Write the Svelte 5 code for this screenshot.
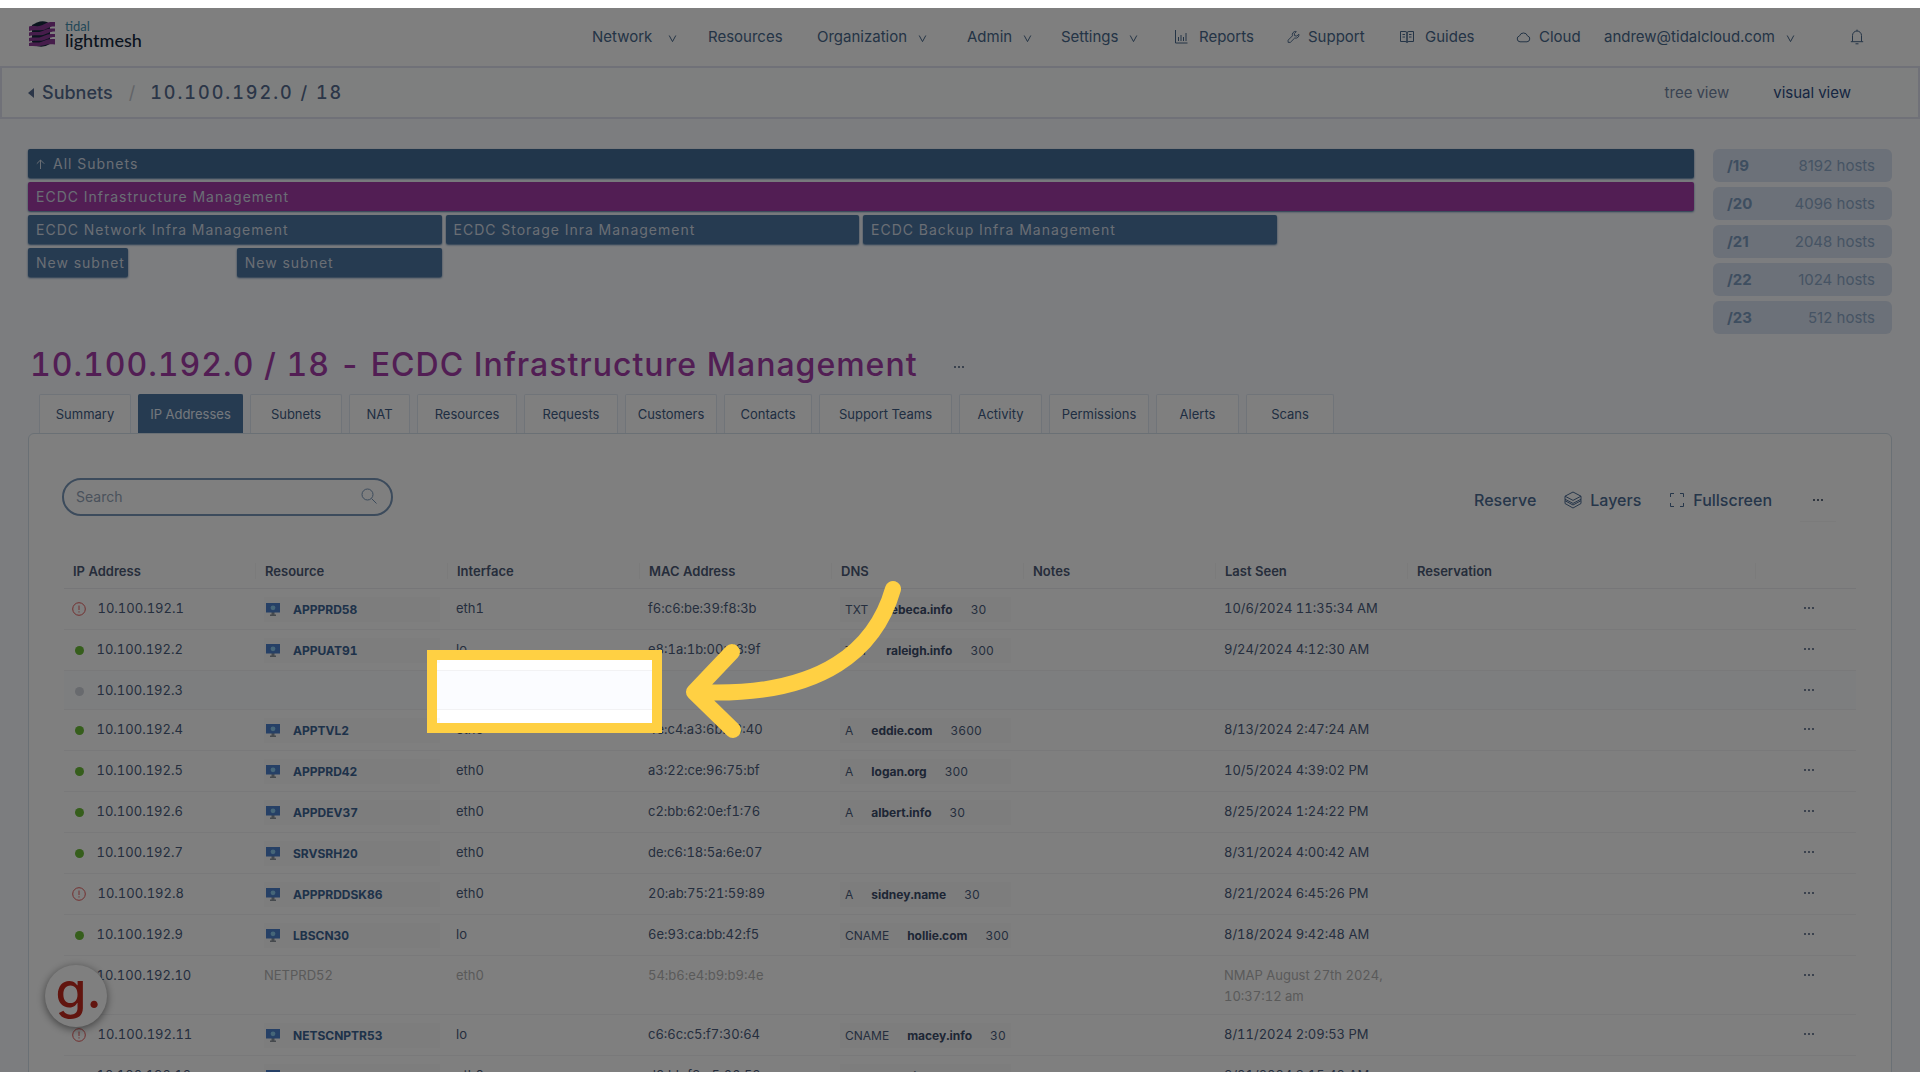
<script lang="ts">
  type Dns = { type: string; name: string; ttl: number };
  type Row = {
    ip: string;
    status: 'up' | 'warn' | 'free';
    resource?: string;
    iface?: string;
    mac?: string;
    dns?: Dns;
    seen?: string;
    discovered?: boolean;
  };

  const hosts = [
    { mask: '/19', count: 8192 },
    { mask: '/20', count: 4096 },
    { mask: '/21', count: 2048 },
    { mask: '/22', count: 1024 },
    { mask: '/23', count: 512 },
  ];

  const tabs = [
    'Summary',
    'IP Addresses',
    'Subnets',
    'NAT',
    'Resources',
    'Requests',
    'Customers',
    'Contacts',
    'Support Teams',
    'Activity',
    'Permissions',
    'Alerts',
    'Scans',
  ];

  const columns = [
    'IP Address',
    'Resource',
    'Interface',
    'MAC Address',
    'DNS',
    'Notes',
    'Last Seen',
    'Reservation',
  ];

  const rows: Row[] = [
    { ip: '10.100.192.1', status: 'warn', resource: 'APPPRD58', iface: 'eth1', mac: 'f6:c6:be:39:f8:3b', dns: { type: 'TXT', name: 'rebeca.info', ttl: 30 }, seen: '10/6/2024 11:35:34 AM' },
    { ip: '10.100.192.2', status: 'up', resource: 'APPUAT91', iface: 'lo', mac: 'e8:1a:1b:00:48:9f', dns: { type: 'TXT', name: 'raleigh.info', ttl: 300 }, seen: '9/24/2024 4:12:30 AM' },
    { ip: '10.100.192.3', status: 'free' },
    { ip: '10.100.192.4', status: 'up', resource: 'APPTVL2', iface: 'eth0', mac: '4e:c4:a3:6b:d3:40', dns: { type: 'A', name: 'eddie.com', ttl: 3600 }, seen: '8/13/2024 2:47:24 AM' },
    { ip: '10.100.192.5', status: 'up', resource: 'APPPRD42', iface: 'eth0', mac: 'a3:22:ce:96:75:bf', dns: { type: 'A', name: 'logan.org', ttl: 300 }, seen: '10/5/2024 4:39:02 PM' },
    { ip: '10.100.192.6', status: 'up', resource: 'APPDEV37', iface: 'eth0', mac: 'c2:bb:62:0e:f1:76', dns: { type: 'A', name: 'albert.info', ttl: 30 }, seen: '8/25/2024 1:24:22 PM' },
    { ip: '10.100.192.7', status: 'up', resource: 'SRVSRH20', iface: 'eth0', mac: 'de:c6:18:5a:6e:07', seen: '8/31/2024 4:00:42 AM' },
    { ip: '10.100.192.8', status: 'warn', resource: 'APPPRDDSK86', iface: 'eth0', mac: '20:ab:75:21:59:89', dns: { type: 'A', name: 'sidney.name', ttl: 30 }, seen: '8/21/2024 6:45:26 PM' },
    { ip: '10.100.192.9', status: 'up', resource: 'LBSCN30', iface: 'lo', mac: '6e:93:ca:bb:42:f5', dns: { type: 'CNAME', name: 'hollie.com', ttl: 300 }, seen: '8/18/2024 9:42:48 AM' },
    { ip: '10.100.192.10', status: 'up', resource: 'NETPRD52', iface: 'eth0', mac: '54:b6:e4:b9:b9:4e', seen: 'NMAP August 27th 2024, 10:37:12 am', discovered: true },
    { ip: '10.100.192.11', status: 'warn', resource: 'NETSCNPTR53', iface: 'lo', mac: 'c6:6c:c5:f7:30:64', dns: { type: 'CNAME', name: 'macey.info', ttl: 30 }, seen: '8/11/2024 2:09:53 PM' },
    { ip: '10.100.192.12', status: 'up', resource: 'APPDEV12', iface: 'eth0', mac: 'd2:bb:f8:e5:66:52', dns: { type: 'A', name: 'brant.biz', ttl: 30 }, seen: '8/21/2024 3:15:42 AM' },
  ];

  let activeTab = $state('IP Addresses');
  let search = $state('');

  const visibleRows = $derived(
    rows.filter((r) =>
      [r.ip, r.resource, r.mac, r.dns?.name].join(' ').toLowerCase().includes(search.toLowerCase())
    )
  );
</script>

{#snippet chevron()}
  <svg class="chevron" viewBox="0 0 9 9" width="9" height="9">
    <path d="M1.200 1.500 4.500 7.600 7.800 1.500" />
  </svg>
{/snippet}

{#snippet dots()}
  <svg class="dots" viewBox="0 0 14 4" width="14" height="4">
    <circle cx="3" cy="2" r="1" />
    <circle cx="7" cy="2" r="1" />
    <circle cx="11" cy="2" r="1" />
  </svg>
{/snippet}

<div class="screen">
  <header>
    <a class="logo" href="#home">
      <svg viewBox="0 0 26 26" width="26" height="26">
        <path class="logo-dark" d="M8 1.500Q13-.5 18 1l3 2v20q-8 5-16 1l-2-3V4z" />
        <path class="logo-band" d="M0 5.500c5-2 7 1 12-1s6-4 14-3.500v4.500c-6-.500-7 2.500-12 3.500s-9-.500-14 1z" />
        <path class="logo-band" d="M0 11.500c5-1.500 8 .5 12-1s7-3.500 14-3v3c-6 0-8 2.500-12 3.500s-9-.500-14 1z" />
        <path class="logo-band" d="M0 17c5-1.500 8 .5 12-1s7-3.500 14-3v3c-6 0-8 2.500-12 3.500s-9-.500-14 1z" />
        <path class="logo-band" d="M0 22c5-1.500 8 .5 12-1s7-3.500 14-3v5.500c-6-.500-8 0-12 1s-9 .5-14 .5z" />
      </svg>
      <span class="logo-text">
        <span class="logo-tidal">tidal</span>
        <span class="logo-name">lightmesh</span>
      </span>
    </a>
    <nav>
      <a class="wide" href="#network">Network {@render chevron()}</a>
      <a href="#resources">Resources</a>
      <a href="#organization">Organization {@render chevron()}</a>
      <a href="#admin">Admin {@render chevron()}</a>
      <a href="#settings">Settings {@render chevron()}</a>
      <a href="#reports">
        <svg viewBox="0 0 13 14" width="14" height="14"><path d="M1 0v13h12M4 11V7M6.500 11V5M9 11V7M11.500 11V3" /></svg>
        Reports
      </a>
      <a class="tight" href="#support">
        <svg viewBox="0 0 14 14" width="13" height="14"><path d="M9.500 1a3.500 3.500 0 0 0-3.600 4.700L1.200 10.400v2.400h2.400l4.700-4.700A3.500 3.500 0 0 0 12.800 4L10.600 6 8.200 5.600 7.900 3.300 10 1.200z" /></svg>
        Support
      </a>
      <a href="#guides">
        <svg viewBox="0 0 14 12" width="14" height="12"><path d="M.5.5H5q2 0 2 1.500V11.500q0-1-2-1H.500zM13.500.5H9Q7 .5 7 2v9.500q0-1 2-1h4.500zM2.500 3.500h2.500M2.500 6h2.500M9 3.500h2.500M9 6h2.500" /></svg>
        Guides
      </a>
      <a class="tight" href="#cloud">
        <svg viewBox="0 0 15 12" width="15" height="12"><path d="M4 10.800a3 3 0 0 1-.5-5.900 4.200 4.200 0 0 1 8 0 3 3 0 0 1-.5 5.900z" /></svg>
        Cloud
      </a>
      <a href="#account">andrew@tidalcloud.com {@render chevron()}</a>
      <button class="plain" aria-label="Notifications">
        <svg viewBox="0 0 14 16" width="14" height="16"><path d="M2.500 12.500V6.500a4.500 4.500 0 0 1 9 0v6M.8 12.700h12.400M7 2V.6M5.500 14.800h3" /></svg>
      </button>
    </nav>
  </header>

  <div class="crumbs">
    <a class="back" href="#subnets">
      <svg viewBox="0 0 6 10" width="6" height="10"><path d="M6 0v10L0 5z" /></svg>
      Subnets
    </a>
    <span class="slash">/</span>
    <span class="current">10.100.192.0 / 18</span>
    <a class="view" href="#tree">tree view</a>
    <a class="view selected" href="#visual">visual view</a>
  </div>

  <main>
    <section class="map">
      <div class="blocks">
        <a class="block all" href="#all">
          <svg viewBox="0 0 9 10" width="9" height="10"><path d="M4.500 10V1M.8 4.700 4.500 1l3.700 3.700" /></svg>
          All Subnets
        </a>
        <a class="block own" href="#own">ECDC Infrastructure Management</a>
        <a class="block quarter" href="#net">ECDC Network Infra Management</a>
        <a class="block quarter" href="#storage">ECDC Storage Inra Management</a>
        <a class="block quarter" href="#backup">ECDC Backup Infra Management</a>
        <a class="block first" href="#new1">New subnet</a>
        <a class="block second" href="#new2">New subnet</a>
      </div>
      <div class="hosts">
        {#each hosts as h (h.mask)}
          <button class="host">
            <b>{h.mask}</b>
            <span>{h.count} hosts</span>
          </button>
        {/each}
      </div>
    </section>

    <div class="title">
      <h1>10.100.192.0 / 18 - ECDC Infrastructure Management</h1>
      <button class="plain" aria-label="Subnet actions">{@render dots()}</button>
    </div>

    <div class="tabs" role="tablist">
      {#each tabs as tab (tab)}
        <button
          role="tab"
          aria-selected={tab === activeTab}
          class:active={tab === activeTab}
          onclick={() => (activeTab = tab)}
        >
          {tab}
        </button>
      {/each}
    </div>

    <section class="panel">
      <div class="toolbar">
        <div class="search">
          <input type="text" placeholder="Search" aria-label="Search" bind:value={search} />
          <svg viewBox="0 0 16 16" width="16" height="16"><circle cx="6.500" cy="6.500" r="5.500" /><path d="m10.500 10.500 5 5" /></svg>
        </div>
        <div class="tools">
          <button class="tool">Reserve</button>
          <button class="tool">
            <svg viewBox="0 0 18 18" width="18" height="18"><path d="M9 1l8 4.200L9 9.400 1 5.200zM1 5.200v3L9 12.400l8-4.200v-3M1 8.200v1.500L9 14l8-4.300V8.200M1 9.700v2.800L9 17l8-4.500V9.700" /></svg>
            Layers
          </button>
          <button class="tool">
            <svg viewBox="0 0 16 16" width="16" height="16"><path d="M1.500 5V1.500H5M11 1.500h3.500V5M14.500 11v3.500H11M5 14.500H1.500V11" /></svg>
            Fullscreen
          </button>
          <button class="more" aria-label="Table actions">{@render dots()}</button>
        </div>
      </div>

      <table>
        <thead>
          <tr>
            {#each columns as col (col)}
              <th class:rest={col === 'Reservation'}><span>{col}</span></th>
            {/each}
            <th class="actions" aria-label="Actions"></th>
          </tr>
        </thead>
        <tbody>
          {#each visibleRows as r (r.ip)}
            <tr class:free={r.status === 'free'} class:discovered={r.discovered}>
              <td class="ip">
                {#if r.status === 'warn'}
                  <svg viewBox="0 0 14 14" width="14" height="14"><circle cx="7" cy="7" r="6.300" /><path d="M7 3.500v4.500M7 9.300v1.200" /></svg>
                {:else}
                  <i class="dot"></i>
                {/if}
                <span>{r.ip}</span>
              </td>
              <td>
                {#if r.discovered}
                  {r.resource}
                {:else if r.resource}
                  <a class="chip resource" href="#resource">
                    <svg viewBox="0 0 14 13" width="14" height="13">
                      <path class="pc-stand" d="M5.500 9h3v2.500H10V13H4v-1.500h1.500z" />
                      <path class="pc-screen" d="M0 0h14v9.500H0z" />
                      <circle class="pc-globe" cx="7" cy="4.800" r="2.400" />
                    </svg>
                    {r.resource}
                  </a>
                {/if}
              </td>
              <td>{r.iface ?? ''}</td>
              <td>{r.mac ?? ''}</td>
              <td>
                {#if r.dns}
                  <span class="chip dns">
                    <span>{r.dns.type}</span>
                    <b>{r.dns.name}</b>
                    <span>{r.dns.ttl}</span>
                  </span>
                {/if}
              </td>
              <td></td>
              <td class="seen">{r.seen ?? ''}</td>
              <td></td>
              <td class="actions">
                <button class="plain" aria-label="Actions for {r.ip}">{@render dots()}</button>
              </td>
            </tr>
          {/each}
        </tbody>
      </table>
    </section>
  </main>

  <button class="help">g.</button>

  <div class="spotlight"></div>
  <svg class="arrow" viewBox="0 0 224 168" width="224" height="168">
    <path d="M211 16C195 72 145 126 12 119M50 79 12 119 51 157" />
  </svg>
</div>

<style>
  :global(body) {
    margin: 0;
    background: #fff;
    font-family: Inter, 'Liberation Sans', sans-serif;
  }

  /* the app shot sits between two thin white margins */
  .screen {
    position: relative;
    box-sizing: border-box;
    height: calc(100vh - 16px);
    margin: 8px 0;
    overflow: hidden;
    background: #f8fafe;
    color: #4a5c7c;
    font-size: 13px;
    font-variant-numeric: tabular-nums;
  }

  a {
    color: inherit;
    text-decoration: none;
  }

  button {
    font-family: inherit;
    font-variant-numeric: inherit;
    cursor: pointer;
  }

  svg {
    flex: none;
    fill: none;
    stroke: currentColor;
  }

  .plain {
    display: flex;
    padding: 0;
    border: 0;
    background: none;
    color: inherit;
  }

  .dots {
    fill: currentColor;
    stroke: none;
  }

  header {
    display: flex;
    justify-content: space-between;
    align-items: center;
    height: 58px;
    padding-left: 29px;
    background: #fff;
  }

  .logo {
    display: flex;
    align-items: center;
    gap: 10px;
    margin-bottom: 6px;
    font-family: Lato, sans-serif;
  }

  .logo-dark {
    fill: #14283c;
    stroke: none;
  }

  .logo-band {
    fill: #8c3a96;
    stroke: none;
  }

  .logo-text {
    display: flex;
    flex-direction: column;
  }

  .logo-tidal {
    font-size: 13px;
    line-height: 12px;
    color: #4690b0;
  }

  .logo-name {
    font-size: 18px;
    line-height: 16px;
    font-weight: 500;
    color: #14283c;
  }

  nav {
    display: grid;
    grid-template-columns: 116px 109px 150px 94px 113px 113px 113px 116px 88px 246px 70px;
    align-items: center;
    padding-bottom: 1px;
    font-size: 15px;
    color: #48688c;
  }

  nav a {
    display: flex;
    align-items: center;
    gap: 11px;
    white-space: nowrap;
  }

  nav a.wide {
    gap: 16px;
  }

  nav a.tight {
    gap: 8px;
  }

  .chevron {
    margin-top: 3px;
  }

  .crumbs {
    display: flex;
    align-items: center;
    box-sizing: border-box;
    height: 53px;
    padding: 0 67px 0 26px;
    border: 2px solid #e0e2f0;
    background: #fdfffe;
    font-size: 18px;
    font-weight: 500;
    color: #566c90;
  }

  .back {
    display: flex;
    align-items: center;
    gap: 8px;
  }

  .back svg {
    fill: currentColor;
    stroke: none;
  }

  .slash {
    margin: 0 15px 0 16px;
    font-weight: 400;
    color: #c4c8d0;
  }

  .current {
    margin-right: auto;
    letter-spacing: 2px;
  }

  .view {
    margin-left: 44px;
    font-size: 15px;
    font-weight: 400;
    color: #7286a4;
  }

  .view.selected {
    color: #2c4c84;
  }

  main {
    padding: 30px 28px 0;
  }

  .map {
    display: flex;
    align-items: flex-start;
    gap: 19px;
  }

  .blocks {
    flex: 1;
    display: grid;
    grid-template-columns: repeat(16, minmax(0, 1fr));
    gap: 4px;
    font-size: 14px;
  }

  .block {
    display: flex;
    align-items: center;
    gap: 8px;
    box-sizing: border-box;
    height: 29px;
    padding: 0 0 0 8px;
    border-radius: 2px;
    background: #4c76a2;
    box-shadow: 0 1px 2px #4c76a2;
    color: #d4dce8;
    letter-spacing: 1px;
    white-space: nowrap;
  }

  .all {
    grid-column: 1 / -1;
    background: #426c96;
  }

  .own {
    grid-column: 1 / -1;
    background: #a43ca8;
  }

  .quarter {
    grid-column: span 4;
  }

  .first {
    grid-column: 1;
  }

  .second {
    grid-column: 3 / span 2;
  }

  .hosts {
    display: flex;
    flex-direction: column;
    gap: 5px;
    width: 179px;
  }

  .host {
    display: flex;
    justify-content: space-between;
    align-items: center;
    height: 33px;
    padding: 0 17px 0 14px;
    border: 0;
    border-radius: 6px;
    background: #d8e2f2;
    font-size: 15px;
    line-height: 18px;
    font-variant-numeric: normal;
    color: #8ca8c8;
  }

  .host b {
    font-weight: 700;
    color: #7c9cc0;
  }

  .title {
    display: flex;
    align-items: center;
    gap: 34px;
    margin-top: 12px;
    padding-left: 2px;
  }

  .title .plain {
    padding-top: 4px;
  }

  h1 {
    margin: 0;
    font-size: 32px;
    line-height: 38px;
    font-weight: 500;
    letter-spacing: 1px;
    color: #a43ca8;
  }

  .tabs {
    display: grid;
    grid-template-columns: 92px 105px 92px 61px 100px 94px 92px 88px 133px 83px 100px 83px 88px;
    gap: 7px;
    margin-top: 10px;
    padding-left: 11px;
  }

  .tabs button {
    height: 39px;
    padding: 0;
    border: 1px solid #e0e8f2;
    border-bottom: 0;
    border-radius: 2px 2px 0 0;
    background: #fff;
    font-size: 13px;
    color: #3e5c84;
    white-space: nowrap;
  }

  .tabs button.active {
    border-color: #4c76a2;
    background: #4c76a2;
    color: #e8f0fa;
  }

  .panel {
    min-height: 700px;
    padding: 44px 33px 0;
    border: 1px solid #d4e0ea;
    border-radius: 6px;
    background: #fff;
  }

  .toolbar {
    display: flex;
    justify-content: space-between;
    align-items: flex-start;
  }

  .search {
    display: flex;
    align-items: center;
    box-sizing: border-box;
    width: 331px;
    height: 38px;
    padding: 0 14px 2px 12px;
    border: 2px solid #7896b8;
    border-radius: 19px;
    color: #7896b8;
  }

  .search input {
    flex: 1;
    min-width: 0;
    padding: 0;
    border: 0;
    outline: 0;
    background: none;
    font-family: inherit;
    font-size: 14px;
    color: #4a5c7c;
  }

  .search input::placeholder {
    color: #94a4b8;
    opacity: 1;
  }

  .tools {
    display: flex;
    align-items: center;
    gap: 28px;
    padding-right: 22px;
  }

  .tool {
    display: flex;
    align-items: center;
    gap: 8px;
    padding: 0;
    border: 0;
    background: none;
    font-size: 16px;
    font-weight: 500;
    color: #4c6c94;
  }

  .more {
    display: flex;
    justify-content: center;
    align-items: center;
    width: 36px;
    height: 44px;
    padding: 0;
    border: 0;
    border-bottom: 1px solid #f6f6f6;
    background: none;
    color: #2c3c54;
  }

  table {
    width: calc(100% - 4px);
    margin: 31px 2px 0;
    border-collapse: separate;
    border-spacing: 0;
    table-layout: fixed;
  }

  th {
    width: 192px;
    height: 36px;
    box-sizing: border-box;
    padding: 0;
    border-bottom: 1px solid #ececf0;
    font-size: 13px;
    font-weight: 600;
    text-align: left;
    color: #4c5a76;
  }

  th span {
    display: block;
    padding-left: 9px;
    border-right: 1px solid #f6f6f6;
  }

  th.rest {
    width: auto;
  }

  th.actions {
    width: 100px;
  }

  td {
    box-sizing: border-box;
    height: 39px;
    padding: 9px 8px 7px;
    border-bottom: 1px solid #f2f2f4;
    line-height: 21px;
    vertical-align: top;
  }

  .ip {
    white-space: nowrap;
  }

  .ip svg,
  .dot {
    display: inline-block;
    vertical-align: middle;
  }

  .ip svg {
    margin-right: 8px;
    stroke: #e45c5c;
  }

  .dot {
    width: 9px;
    height: 9px;
    margin: 0 9px 0 3px;
    border-radius: 50%;
    background: #6cbc38;
  }

  .free td {
    background: #fbfcff;
  }

  .free .dot {
    background: #d0d4dc;
  }

  .chip {
    display: flex;
    align-items: center;
    height: 25px;
    margin-top: -1px;
    background: #fafafa;
    font-size: 12px;
  }

  .resource {
    gap: 13px;
    padding-left: 2px;
    font-weight: 700;
    color: #3c6494;
  }

  .resource svg {
    stroke: none;
  }

  .pc-screen {
    fill: #4c80cc;
  }

  .pc-globe {
    fill: #8cccf0;
  }

  .pc-stand {
    fill: #8c949c;
  }

  .dns {
    gap: 18px;
    padding-left: 5px;
    margin-right: 5px;
  }

  .dns b {
    color: #3c4c6a;
  }

  .discovered td {
    color: #b4b4b4;
  }

  .discovered td.ip {
    color: #4a5c7c;
  }

  td.actions {
    padding-left: 46px;
    color: #4a5c7c;
  }

  td.actions .plain {
    height: 19px;
    align-items: center;
  }

  .help {
    position: absolute;
    left: 45px;
    bottom: 45px;
    width: 62px;
    height: 62px;
    padding: 0 0 12px 5px;
    border: 0;
    border-radius: 50%;
    background: #fff;
    box-shadow: 0 2px 8px rgba(0, 0, 0, 0.5);
    font-size: 50px;
    line-height: 50px;
    font-weight: 500;
    font-variant-numeric: normal;
    color: #c42a1e;
  }

  /* everything outside the frame is dimmed by its shadow */
  .spotlight {
    position: absolute;
    left: 427px;
    top: 642px;
    box-sizing: border-box;
    width: 235px;
    height: 83px;
    border: 10px solid #ffd043;
    box-shadow: 0 0 0 3000px rgba(0, 0, 0, 0.5);
    pointer-events: none;
  }

  .arrow {
    position: absolute;
    left: 682px;
    top: 565px;
    stroke: #ffd043;
    stroke-width: 16;
    stroke-linecap: round;
    stroke-linejoin: round;
    pointer-events: none;
  }
</style>
